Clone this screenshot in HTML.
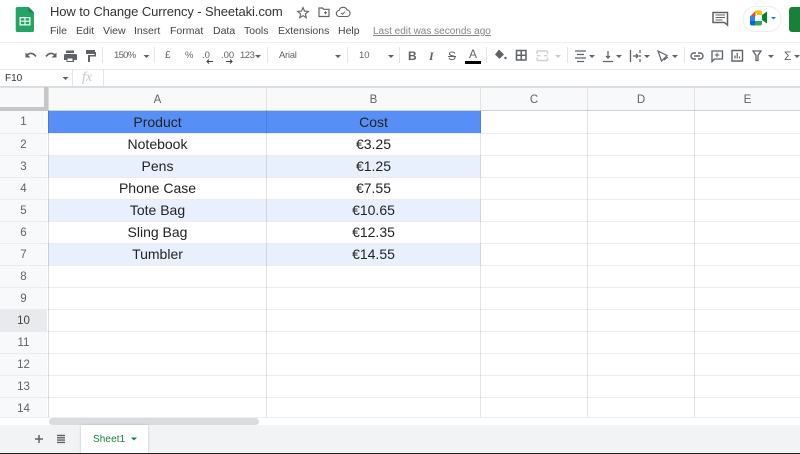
<!DOCTYPE html>
<html><head><meta charset="utf-8">
<style>
html,body{margin:0;padding:0;background:#fff}
#p{position:relative;width:800px;height:454px;overflow:hidden;background:#fff;font-family:"Liberation Sans",Arial,sans-serif;color:#3c4043;filter:blur(.35px)}
#p div{position:absolute;white-space:nowrap}
.m{top:25px;font-size:10.5px;line-height:13px;color:#444}
.t{top:50px;font-size:9.5px;line-height:12px;color:#5f6368}
.sep{top:47px;width:1px;height:16px;background:#e3e5e8}
.h{background:#f8f9fa;top:88px;height:22px;text-align:center;font-size:11.5px;line-height:24px;color:#5f6368}
.r{left:0;width:47px;text-align:center;font-size:11.5px;line-height:22px;height:21px;color:#5f6368;background:#f8f9fa}
.c{font-size:14px;line-height:22px;text-align:center;color:#222;height:22px}
.a{left:49px;width:217px}.b{left:267px;width:213px}
.hl{left:0;width:800px;height:1px;background:#ececec}
.vl{top:88px;width:1px;height:329px;background:rgba(0,0,0,.11)}
svg{position:absolute;left:0;top:0}
</style></head><body><div id="p">

<div style="left:50px;top:3px;font-size:13px;line-height:18px;color:#333;letter-spacing:-.1px">How to Change Currency - Sheetaki.com</div>
<div class="m" style="left:50px">File</div>
<div class="m" style="left:76px">Edit</div>
<div class="m" style="left:103px">View</div>
<div class="m" style="left:134px">Insert</div>
<div class="m" style="left:170px">Format</div>
<div class="m" style="left:213px">Data</div>
<div class="m" style="left:244px">Tools</div>
<div class="m" style="left:278px">Extensions</div>
<div class="m" style="left:338px">Help</div>
<div class="m" style="left:373px;font-size:10px;color:#80868b;text-decoration:underline">Last edit was seconds ago</div>

<div style="left:0;top:42px;width:800px;height:1px;background:#eef0f1"></div>
<div style="left:0;top:69px;width:800px;height:1px;background:#e6e8ea"></div>
<div style="left:0;top:86px;width:800px;height:1px;background:#dcdcdc"></div>

<div class="t" style="left:114px;letter-spacing:-.7px">150%</div>
<div class="t" style="left:165px;font-size:10px">£</div>
<div class="t" style="left:185px">%</div>
<div class="t" style="left:202px">.0</div>
<div class="t" style="left:221px">.00</div>
<div class="t" style="left:240px;letter-spacing:-.5px">123</div>
<div class="t" style="left:279px;letter-spacing:-.3px">Arial</div>
<div class="t" style="left:359px">10</div>
<div class="t" style="left:408px;font-weight:bold;font-size:12px;line-height:12px">B</div>
<div class="t" style="left:429px;font-style:italic;font-size:12px;line-height:12px;font-family:'Liberation Serif',serif;font-weight:bold">I</div>
<div class="t" style="left:448px;font-size:12px;text-decoration:line-through">S</div>
<div class="t" style="left:469px;top:48px;font-size:12px">A</div>
<div style="left:465px;top:61px;width:16px;height:3px;background:#000"></div>
<div class="t" style="left:784px;top:49px;font-size:12px;line-height:14px">Σ</div>

<div class="sep" style="left:102px"></div><div class="sep" style="left:154px"></div>
<div class="sep" style="left:267px"></div><div class="sep" style="left:347px"></div>
<div class="sep" style="left:399px"></div><div class="sep" style="left:486px"></div>
<div class="sep" style="left:567px"></div><div class="sep" style="left:684px"></div>

<div style="left:5px;top:72px;font-size:10px;line-height:13px;color:#333">F10</div>
<div style="left:72px;top:70px;width:1px;height:16px;background:#e6e6e6"></div>
<div style="left:103px;top:70px;width:1px;height:16px;background:#e6e6e6"></div>
<div style="left:82px;top:70px;font-family:'Liberation Serif',serif;font-style:italic;font-size:14px;line-height:16px;color:#c4c6c8">fx</div>

<!-- headers -->
<div class="h" style="left:0;top:87px;width:48px;height:23px"></div>
<div class="h" style="left:49px;width:217px">A</div>
<div class="h" style="left:267px;width:213px">B</div>
<div class="h" style="left:481px;width:106px">C</div>
<div class="h" style="left:588px;width:106px">D</div>
<div class="h" style="left:695px;width:105px">E</div>
<div style="left:0;top:87px;width:800px;height:1px;background:#e0e0e0"></div>
<div style="left:0;top:110px;width:800px;height:1px;background:#d0d0d0"></div>
<div style="left:44px;top:87px;width:4px;height:24px;background:#c6c6c6"></div>
<div style="left:0;top:107px;width:48px;height:4px;background:#c6c6c6"></div>

<!-- row headers -->
<div class="r" style="top:111px;height:22px">1</div>
<div class="r" style="top:134px">2</div>
<div class="r" style="top:156px">3</div>
<div class="r" style="top:178px">4</div>
<div class="r" style="top:200px">5</div>
<div class="r" style="top:222px">6</div>
<div class="r" style="top:244px">7</div>
<div class="r" style="top:266px">8</div>
<div class="r" style="top:288px">9</div>
<div class="r" style="top:310px;background:#e8eaed;color:#444">10</div>
<div class="r" style="top:332px">11</div>
<div class="r" style="top:354px">12</div>
<div class="r" style="top:376px">13</div>
<div class="r" style="top:398px;height:19px">14</div>

<!-- fills -->
<div style="left:48px;top:111px;width:433px;height:22px;background:#578ff7"></div>
<div style="left:48px;top:156px;width:433px;height:21px;background:#e8f0fd"></div>
<div style="left:48px;top:200px;width:433px;height:21px;background:#e8f0fd"></div>
<div style="left:48px;top:244px;width:433px;height:21px;background:#e8f0fd"></div>

<!-- grid -->
<div class="hl" style="top:133px"></div><div class="hl" style="top:155px"></div>
<div class="hl" style="top:177px"></div><div class="hl" style="top:199px"></div>
<div class="hl" style="top:221px"></div><div class="hl" style="top:243px"></div>
<div class="hl" style="top:265px"></div><div class="hl" style="top:287px"></div>
<div class="hl" style="top:309px"></div><div class="hl" style="top:331px"></div>
<div class="hl" style="top:353px"></div><div class="hl" style="top:375px"></div>
<div class="hl" style="top:397px"></div>
<div class="vl" style="left:48px;background:rgba(0,0,0,.14)"></div>
<div class="vl" style="left:266px"></div>
<div class="vl" style="left:480px"></div>
<div class="vl" style="left:587px"></div>
<div class="vl" style="left:694px"></div>

<!-- cells -->
<div class="c a" style="top:111px">Product</div><div class="c b" style="top:111px">Cost</div>
<div class="c a" style="top:133px">Notebook</div><div class="c b" style="top:133px">€3.25</div>
<div class="c a" style="top:155px">Pens</div><div class="c b" style="top:155px">€1.25</div>
<div class="c a" style="top:177px">Phone Case</div><div class="c b" style="top:177px">€7.55</div>
<div class="c a" style="top:199px">Tote Bag</div><div class="c b" style="top:199px">€10.65</div>
<div class="c a" style="top:221px">Sling Bag</div><div class="c b" style="top:221px">€12.35</div>
<div class="c a" style="top:243px">Tumbler</div><div class="c b" style="top:243px">€14.55</div>

<!-- bottom -->
<div style="left:0;top:417px;width:800px;height:8px;background:#fff;border-top:1px solid #eceff1;box-sizing:border-box"></div>
<div style="left:49px;top:418px;width:210px;height:7px;border-radius:4px;background:#dadce0"></div>
<div style="left:0;top:425px;width:800px;height:28px;background:#f1f3f4"></div>
<div style="left:0;top:453px;width:800px;height:1px;background:#222"></div>
<div style="left:81px;top:425px;width:67px;height:28px;background:#fff;box-shadow:0 0 2px rgba(60,64,67,.3)"></div>
<div style="left:93px;top:433px;font-size:10px;line-height:13px;color:#188038;letter-spacing:.1px">Sheet1</div>

<svg width="800" height="454" viewBox="0 0 800 454" fill="none">
  <!-- sheets logo -->
  <path d="M17.500 7h11l5.500 5.500v17.700a1.800 1.800 0 0 1-1.800 1.800H17.500a1.800 1.800 0 0 1-1.800-1.800V8.800A1.800 1.800 0 0 1 17.500 7z" fill="#23a566"/>
  <path d="M28.500 7l5.500 5.500h-3.700a1.800 1.800 0 0 1-1.800-1.800z" fill="#0f8a4f"/>
  <path d="M19.500 17h11v8.500h-11z M20.800 18.200v2.400h3.600v-2.400z M25.600 18.200v2.400h3.600v-2.400z M20.800 21.800v2.500h3.600v-2.500z M25.600 21.800v2.500h3.600v-2.500z" fill="#f1f8f4" fill-rule="evenodd"/>

  <!-- star -->
  <path d="M303 7.500l1.500 3.600 3.900.3-3 2.500.9 3.800-3.300-2-3.300 2 .9-3.800-3-2.500 3.900-.3z" stroke="#5f6368" stroke-width="1.100"/>
  <!-- folder -->
  <path d="M319 8h3.500l1.200 1.300h5.300v7.200h-10z" stroke="#5f6368" stroke-width="1.200"/>
  <path d="M324 12.800h3M325.500 11.300v3" stroke="#5f6368"/>
  <!-- cloud -->
  <path d="M343 16.500h-3.500a3 3 0 0 1-.4-6 4.200 4.200 0 0 1 7.900-.7 3.400 3.400 0 0 1 .4 6.700z" stroke="#5f6368" stroke-width="1.100"/>
  <path d="M341 13l1.500 1.300 2.500-2.600" stroke="#5f6368"/>

  <!-- comment -->
  <path d="M713 12.500h14.500v12.500l-3-2.500H713z" stroke="#5f6368" stroke-width="1.500"/>
  <path d="M715.500 15h9.500M715.500 17.500h9.500M715.500 20h7" stroke="#5f6368"/>

  <!-- meet pill -->
  <rect x="743" y="6.500" width="38" height="25" rx="12.500" fill="#fff" stroke="#eceef0"/>
  <path d="M750 16.500l4-4h1.500v4z" fill="#ea4335"/>
  <path d="M754 12.500l2-2h1v2z" fill="#ea4335"/>
  <path d="M750 16.500h5v4.500h-5z" fill="#2684fc"/>
  <path d="M750 21h5v4.500h-3a2 2 0 0 1-2-2z" fill="#0066da"/>
  <path d="M755 10.500h5a2 2 0 0 1 2 2v2.500h-5v-1.500h-2z" fill="#fbbc04"/>
  <path d="M755 21h7v2.500a2 2 0 0 1-2 2h-5z" fill="#34a853"/>
  <path d="M762 15l5-3.500v12l-5-3.500z" fill="#00832d"/>
  <path d="M771 17h5l-2.500 2.500z" fill="#1a73e8"/>
  <!-- green button -->
  <rect x="789" y="7" width="20" height="25" rx="3" fill="#188038"/>

  <!-- undo / redo -->
  <path d="M26 56c3-3.500 7-3.500 10 .5" stroke="#5f6368" stroke-width="1.600"/>
  <path d="M25.500 52.500v5h5z" fill="#5f6368"/>
  <path d="M56 56c-3-3.500-7-3.500-10 .5" stroke="#5f6368" stroke-width="1.600"/>
  <path d="M56.500 52.500v5h-5z" fill="#5f6368"/>
  <!-- print -->
  <path d="M66 50.500h8v2.500h-8z M65 54h10.500a1.500 1.500 0 0 1 1.500 1.500V60h-3v2h-7.500v-2H64v-4.500A1.500 1.500 0 0 1 65 54z" fill="#5f6368"/>
  <rect x="67.500" y="58.500" width="5" height="2.500" fill="#fff"/>
  <!-- paint format -->
  <path d="M86 50h9v4h-9z M94 52h2v4.500h-6V62h-2v-7h6.500z" fill="#5f6368"/>

  <!-- carets -->
  <g fill="#5f6368">
    <path d="M143.500 55h6l-3 3z"/><path d="M255 55h6l-3 3z"/><path d="M335 55h6l-3 3z"/>
    <path d="M388 55h6l-3 3z"/><path d="M589 55h6l-3 3z"/><path d="M616 55h6l-3 3z"/>
    <path d="M644 55h6l-3 3z"/><path d="M672 55h6l-3 3z"/><path d="M768 55h6l-3 3z"/>
    <path d="M794 55h6l-3 3z"/>
  </g>
  <path d="M555 55h6l-3 3z" fill="#c8cacc"/>
  <path d="M62.500 77h6l-3 3z" fill="#5f6368"/>

  <!-- decimal arrows -->
  <path d="M213 61.500h-6M209 59.500l-2 2 2 2" stroke="#444" stroke-width="1.100"/>
  <path d="M226 61.500h6M230 59.500l2 2-2 2" stroke="#444" stroke-width="1.100"/>

  <!-- fill colour -->
  <path d="M499 49.500l5 5-3.800 3.800a1 1 0 0 1-1.400 0L495 54.500z" fill="#5f6368"/>
  <circle cx="505.500" cy="58" r="1.200" fill="#5f6368"/>
  <!-- borders -->
  <path d="M516.500 50.500h9.500v9.500h-9.500z M516.500 55.250h9.500 M521.250 50.500v9.500" stroke="#5f6368" stroke-width="1.500"/>
  <!-- merge -->
  <path d="M537 51h10.500M537 60.500h10.500M537 51v3M547.500 51v3M537 57.500v3M547.500 57.500v3M537 55.700h3.500M544 55.700h3.500" stroke="#cfd1d3" stroke-width="1.400"/>
  <!-- align -->
  <path d="M575 51h11M577 54.500h7M575 58h11M577 61.500h7" stroke="#5f6368" stroke-width="1.300"/>
  <!-- valign -->
  <path d="M603 61.500h10M608 51v7M606 56l2 2.200 2-2.200" stroke="#5f6368" stroke-width="1.300"/>
  <!-- wrap -->
  <path d="M630.500 50v12M640 50v3M640 55v2M640 59v3M633 56h4.500M636 54l2 2-2 2" stroke="#5f6368" stroke-width="1.300"/>
  <!-- rotate -->
  <path d="M658 51l9 4.500-5.500 5.500zM664 60l4-3" stroke="#5f6368" stroke-width="1.200"/>
  <!-- link -->
  <path d="M696 53h-2a3 3 0 0 0 0 6h2M698 53h2a3 3 0 0 1 0 6h-2M694 56h6" stroke="#5f6368" stroke-width="1.400"/>
  <!-- comment add -->
  <path d="M712 51h10.500v8h-8l-2.500 2.500z" stroke="#5f6368" stroke-width="1.300"/>
  <path d="M717 52.800v4.500M714.800 55h4.500" stroke="#5f6368"/>
  <!-- chart -->
  <path d="M732 50.500h10.500v10.500H732z" stroke="#5f6368" stroke-width="1.400"/>
  <path d="M735 58.500v-3M737.200 58.500v-5.500M739.500 58.500v-2" stroke="#5f6368" stroke-width="1.200"/>
  <!-- filter -->
  <path d="M753 51h8l-3 4.500v5h-2v-5z" stroke="#5f6368" stroke-width="1.300"/>

  <!-- name box + tabs icons -->
  <path d="M35 439h8M39 435v8" stroke="#5f6368" stroke-width="1.500"/>
  <path d="M57 435.500h8M57 437.800h8M57 440.100h8M57 442.400h8" stroke="#5f6368" stroke-width="1.400"/>
  <path d="M131 437.500h6l-3 3z" fill="#188038"/>
</svg>
</div></body></html>
